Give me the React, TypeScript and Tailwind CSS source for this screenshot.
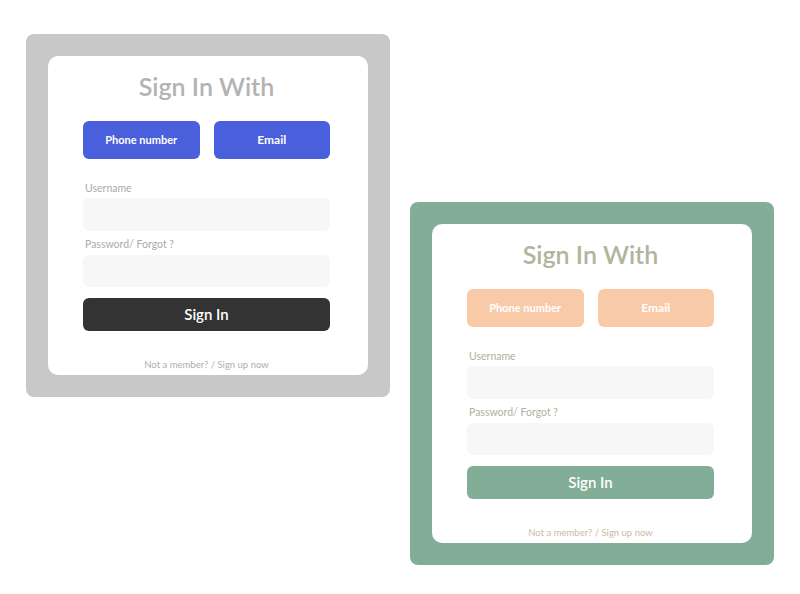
import React from "react";

type Theme = {
  frame: string;
  title: string;
  option: string;
  optionText: string;
  label: string;
  submit: string;
  footer: string;
};

const grayTheme: Theme = {
  frame: "bg-[#c8c8c8]",
  title: "text-[#b3b3b3]",
  option: "bg-[#4a5fdc]",
  optionText: "text-white",
  label: "text-[#ababab]",
  submit: "bg-[#333333]",
  footer: "text-[#adadad]",
};

const greenTheme: Theme = {
  frame: "bg-[#82ae98]",
  title: "text-[#b4b39b]",
  option: "bg-[#f9caa8]",
  optionText: "text-white",
  label: "text-[#b2b09c]",
  submit: "bg-[#82ae98]",
  footer: "text-[#c4bea2]",
};

function SignInCard({ theme }: { theme: Theme }) {
  return (
    <div className={`w-[364px] h-[363px] rounded-[8px] p-[22px] ${theme.frame}`}>
      <div className="w-[320px] h-[319px] bg-white rounded-[10px] pt-[14px] pl-[35px] pr-[38px] flex flex-col">
        <h2 className={`text-center text-[25px] font-semibold leading-[32px] ${theme.title}`}>
          Sign In With
        </h2>

        <div className="mt-[19px] grid grid-cols-2 gap-[14px]">
          <button className={`h-[38px] rounded-[6px] text-[11px] font-bold ${theme.option} ${theme.optionText}`}>
            Phone number
          </button>
          <button className={`h-[38px] rounded-[6px] text-[12px] font-bold ${theme.option} ${theme.optionText}`}>
            Email
          </button>
        </div>

        <label className={`mt-[22px] pl-[2px] text-[10.5px] leading-[14px] ${theme.label}`}>
          Username
        </label>
        <div className="mt-[3px] h-[33px] rounded-[6px] bg-[#f7f7f7]" />

        <label className={`mt-[6px] pl-[2px] text-[10.5px] leading-[14px] ${theme.label}`}>
          Password/ Forgot ?
        </label>
        <div className="mt-[4px] h-[32px] rounded-[6px] bg-[#f7f7f7]" />

        <button className={`mt-[11px] h-[33px] rounded-[6px] text-white text-[15px] font-semibold ${theme.submit}`}>
          Sign In
        </button>

        <p className={`mt-[27px] text-center text-[9.5px] ${theme.footer}`}>
          Not a member? / Sign up now
        </p>
      </div>
    </div>
  );
}

export default function App() {
  return (
    <div
      className="w-[800px] h-[594px] bg-white flex items-start gap-[20px] pl-[26px] pt-[34px]"
      style={{ fontFamily: "Lato, 'Noto Sans', sans-serif" }}
    >
      <SignInCard theme={grayTheme} />
      <div className="mt-[168px]">
        <SignInCard theme={greenTheme} />
      </div>
    </div>
  );
}
